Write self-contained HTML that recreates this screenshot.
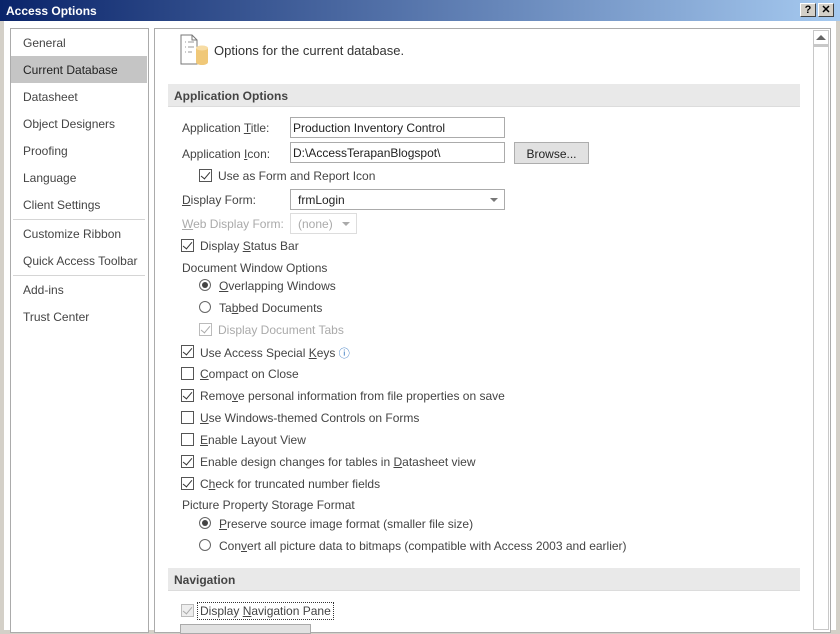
<!DOCTYPE html>
<html><head><meta charset="utf-8"><style>
*{margin:0;padding:0;box-sizing:border-box}
body{width:840px;height:630px;overflow:hidden;background:#d4d0c8;font-family:"Liberation Sans",sans-serif;font-size:12px;color:#444;position:relative}
.a{position:absolute;white-space:nowrap}
#title{left:0;top:0;width:840px;height:21px;background:linear-gradient(to right,#0a246a,#a6caf0);color:#fff;font-weight:bold;font-size:12px;padding:4px 0 0 6px}
.tb{position:absolute;top:3px;width:16px;height:14px;background:#d4d0c8;border:1px solid;border-color:#fff #404040 #404040 #fff;color:#000;font-weight:bold;font-size:11px;text-align:center;line-height:12px}
#body{left:4px;top:21px;width:832px;height:609px;background:#fff}
#left{left:10px;top:28px;width:139px;height:605px;border:1px solid #ababab;background:#fff}
#right{left:154px;top:28px;width:677px;height:605px;border:1px solid #ababab;background:#fff}
.nav{left:23px}
.sep{position:absolute;left:13px;width:132px;height:1px;background:#d5d5d5}
.hdr{position:absolute;left:168px;width:632px;height:23px;background:#e9e9e9;border-bottom:1px solid #dcdcdc;font-weight:bold;padding:5px 0 0 6px}
.cb{position:absolute;width:13px;height:13px;border:1px solid #555;background:#fff}
.cb.on::after{content:"";position:absolute;left:3px;top:0px;width:4px;height:8px;border:solid #333;border-width:0 1.5px 1.5px 0;transform:rotate(40deg)}
.cb.dis{border-color:#bbb}.cb.dis::after{border-color:#aaa}
.rb{position:absolute;width:12px;height:12px;border:1px solid #666;border-radius:50%;background:#fff}
.rb.on::after{content:"";position:absolute;left:2px;top:2px;width:6px;height:6px;border-radius:50%;background:#444}
.inp{position:absolute;height:21px;border:1px solid #ababab;background:#fff;padding:3px 0 0 2px;color:#222}
u{text-decoration:underline}
.g{color:#aaa}
</style></head><body>
<div class="a" id="title">Access Options</div>
<div class="tb" style="left:800px">?</div><div class="tb" style="left:818px">✕</div>
<div class="a" id="body"></div>
<div class="a" id="left"></div>
<div class="a" style="left:11px;top:56px;width:136px;height:27px;background:#c5c5c5"></div>
<div class="a nav" style="top:36px">General</div>
<div class="a nav" style="top:63px;color:#222">Current Database</div>
<div class="a nav" style="top:90px">Datasheet</div>
<div class="a nav" style="top:117px">Object Designers</div>
<div class="a nav" style="top:144px">Proofing</div>
<div class="a nav" style="top:171px">Language</div>
<div class="a nav" style="top:198px">Client Settings</div>
<div class="sep" style="top:219px"></div>
<div class="a nav" style="top:227px">Customize Ribbon</div>
<div class="a nav" style="top:254px">Quick Access Toolbar</div>
<div class="sep" style="top:275px"></div>
<div class="a nav" style="top:283px">Add-ins</div>
<div class="a nav" style="top:310px">Trust Center</div>
<div class="a" id="right"></div>
<div class="a" style="left:813px;top:30px;width:16px;height:600px;border:1px solid #c8c8c8;background:#fff"></div>
<div class="a" style="left:814px;top:44px;width:14px;height:3px;background:#c8c8c8"></div>
<div class="a" style="left:816px;top:35px;width:0;height:0;border:5px solid transparent;border-bottom:5px solid #666;border-top:0"></div>
<svg class="a" style="left:180px;top:34px" width="30" height="32" viewBox="0 0 30 32"><path d="M1 1h11l5 5v24H1z" fill="#fff" stroke="#777"/><path d="M12 1v5h5" fill="none" stroke="#777"/><g stroke="#999"><path d="M5 8h1M8 8h6M5 13h1M8 13h6M5 18h1M8 18h4"/></g><path d="M16 14v14c0 2 3 3 6 3s6-1 6-3V14z" fill="#f0c878"/><ellipse cx="22" cy="14" rx="6" ry="2.5" fill="#f7dca4"/></svg>
<div class="a" style="left:214px;top:43px;font-size:13px;color:#333">Options for the current database.</div>
<div class="hdr" style="top:84px">Application Options</div>
<div class="a" style="left:182px;top:121px">Application <u>T</u>itle:</div>
<div class="inp" style="left:290px;top:117px;width:215px">Production Inventory Control</div>
<div class="a" style="left:182px;top:147px">Application <u>I</u>con:</div>
<div class="inp" style="left:290px;top:142px;width:215px">D:\AccessTerapanBlogspot\</div>
<div class="a" style="left:514px;top:142px;width:75px;height:22px;background:#e1e1e1;border:1px solid #adadad;text-align:center;padding-top:4px;color:#222">Browse...</div>
<div class="cb on" style="left:199px;top:169px"></div><div class="a" style="left:218px;top:169px">Use as Form and Report Icon</div>
<div class="a" style="left:182px;top:193px"><u>D</u>isplay Form:</div>
<div class="inp" style="left:290px;top:189px;width:215px;padding-left:7px">frmLogin<span style="position:absolute;right:6px;top:8px;border:4px solid transparent;border-top:4px solid #777"></span></div>
<div class="a g" style="left:182px;top:217px"><u>W</u>eb Display Form:</div>
<div class="inp g" style="left:290px;top:213px;width:67px;border-color:#ddd;padding-left:7px">(none)<span style="position:absolute;right:6px;top:8px;border:4px solid transparent;border-top:4px solid #aaa"></span></div>
<div class="cb on" style="left:181px;top:239px"></div><div class="a" style="left:200px;top:239px">Display <u>S</u>tatus Bar</div>
<div class="a" style="left:182px;top:261px">Document Window Options</div>
<div class="rb on" style="left:199px;top:279px"></div><div class="a" style="left:219px;top:279px"><u>O</u>verlapping Windows</div>
<div class="rb" style="left:199px;top:301px"></div><div class="a" style="left:219px;top:301px">Ta<u>b</u>bed Documents</div>
<div class="cb on dis" style="left:199px;top:323px"></div><div class="a g" style="left:218px;top:323px">Display Document Tabs</div>
<div class="cb on" style="left:181px;top:345px"></div><div class="a" style="left:200px;top:345px">Use Access Special <u>K</u>eys <span style="color:#2a6ebb;font-size:11px">ⓘ</span></div>
<div class="cb" style="left:181px;top:367px"></div><div class="a" style="left:200px;top:367px"><u>C</u>ompact on Close</div>
<div class="cb on" style="left:181px;top:389px"></div><div class="a" style="left:200px;top:389px">Remo<u>v</u>e personal information from file properties on save</div>
<div class="cb" style="left:181px;top:411px"></div><div class="a" style="left:200px;top:411px"><u>U</u>se Windows-themed Controls on Forms</div>
<div class="cb" style="left:181px;top:433px"></div><div class="a" style="left:200px;top:433px"><u>E</u>nable Layout View</div>
<div class="cb on" style="left:181px;top:455px"></div><div class="a" style="left:200px;top:455px">Enable design changes for tables in <u>D</u>atasheet view</div>
<div class="cb on" style="left:181px;top:477px"></div><div class="a" style="left:200px;top:477px">C<u>h</u>eck for truncated number fields</div>
<div class="a" style="left:182px;top:498px">Picture Property Storage Format</div>
<div class="rb on" style="left:199px;top:517px"></div><div class="a" style="left:219px;top:517px"><u>P</u>reserve source image format (smaller file size)</div>
<div class="rb" style="left:199px;top:539px"></div><div class="a" style="left:219px;top:539px">Con<u>v</u>ert all picture data to bitmaps (compatible with Access 2003 and earlier)</div>
<div class="hdr" style="top:568px">Navigation</div>
<div class="cb on dis" style="left:181px;top:604px;background:#eee"></div><div class="a" style="left:197px;top:602px;border:1px dotted #333;padding:1px 2px">Display <u>N</u>avigation Pane</div>
<div class="a" style="left:180px;top:624px;width:131px;height:10px;border:1px solid #aaa;background:#e1e1e1"></div>
</body></html>
